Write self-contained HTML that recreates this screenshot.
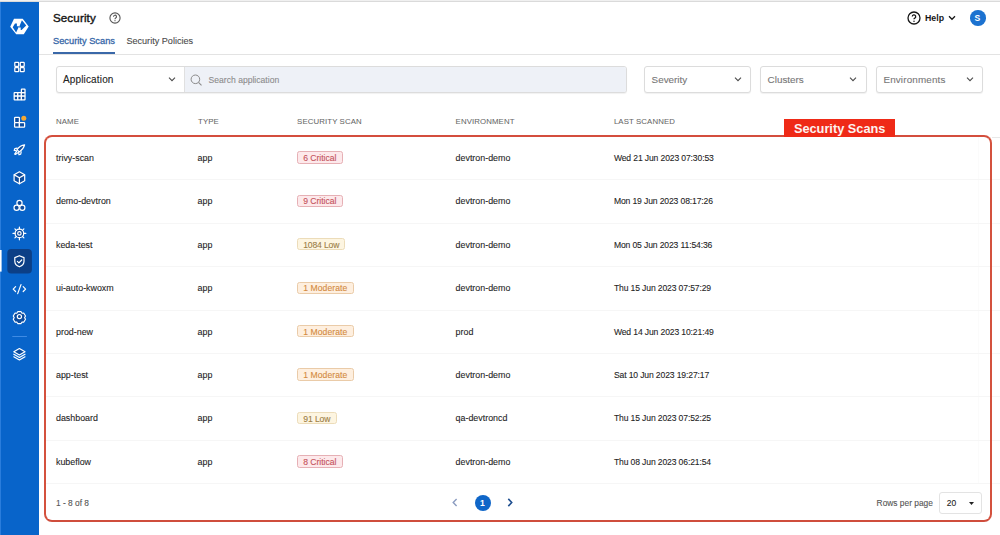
<!DOCTYPE html>
<html><head><meta charset="utf-8">
<style>
*{margin:0;padding:0;box-sizing:border-box}
html,body{width:1000px;height:535px;overflow:hidden;background:#fff;font-family:"Liberation Sans",sans-serif;color:#222}
.a{position:absolute;white-space:nowrap;line-height:1}
.r{position:absolute}
.box{position:absolute;top:66px;height:26.8px;border:1px solid #dcdcdc;border-radius:3px;background:#fff;box-shadow:0 1px 1px rgba(0,0,0,.06)}
.sep{position:absolute;left:46px;width:954px;height:1px;background:#f6f6f6}
.badge{position:absolute;left:296.5px;height:12.3px;border:1px solid;border-radius:2.5px}
.crit{background:#fde9eb;border-color:#e6b0b5}
.mod{background:#feefdf;border-color:#eacba8}
.low{background:#fdf5e1;border-color:#ecdcb9}
</style></head><body>
<div class="r" style="left:0;top:0;width:1000px;height:1px;background:#f0f0f0"></div>
<div class="r" style="left:0;top:1px;width:1000px;height:1px;background:#dadada"></div>
<div class="r" style="left:0;top:2px;width:39px;height:533px;background:#0864ca"></div>
<div class="r" style="left:0;top:2px;width:1px;height:533px;background:#2a7ddc"></div>
<svg style="position:absolute;left:0;top:0" width="39" height="535" viewBox="0 0 39 535">
<g fill="#fff">
<!-- logo -->
<path fill-rule="evenodd" d="M14.00 18.70 22.70 18.70 28.70 26.40 23.80 34.20 16.20 34.20 10.20 26.70Z M12.70 27.30 15.00 23.60 16.90 23.60 16.90 26.20 19.10 26.20 16.10 32.60Z M21.90 20.30 26.20 25.40 21.60 29.90 20.70 29.90 20.70 27.40 18.90 27.40Z"/>
</g>
<g fill="#0d4c9e" stroke="#fff" stroke-width="1.25">
<!-- grid 4 -->
<rect x="14.8" y="62.4" width="3.9" height="3.9" rx=".6"/><rect x="20.3" y="62.4" width="3.9" height="3.9" rx=".6"/>
<rect x="14.8" y="67.6" width="3.9" height="3.9" rx=".6"/><rect x="20.3" y="67.6" width="3.9" height="3.9" rx=".6"/>
<!-- stair grid -->
<rect x="14.2" y="92.6" width="3.6" height="3.6" rx=".4"/><rect x="17.8" y="92.6" width="3.6" height="3.6" rx=".4"/><rect x="21.4" y="92.6" width="3.6" height="3.6" rx=".4"/>
<rect x="14.2" y="96.2" width="3.6" height="3.6" rx=".4"/><rect x="17.8" y="96.2" width="3.6" height="3.6" rx=".4"/><rect x="21.4" y="96.2" width="3.6" height="3.6" rx=".4"/>
<rect x="21.4" y="89.0" width="3.6" height="3.6" rx=".4"/>
<!-- grid with dot -->
<rect x="14.6" y="117.3" width="4.8" height="5.2" rx=".8"/>
<rect x="14.6" y="122.5" width="4.8" height="4.6" rx=".6"/><rect x="19.4" y="122.5" width="5.2" height="4.6" rx=".6"/>
</g>
<circle cx="23.8" cy="118.2" r="2.5" fill="#f5a833"/>
<g fill="none" stroke="#fff" stroke-width="1.2" stroke-linejoin="round" stroke-linecap="round">
<!-- rocket -->
<path d="M24.6 144.9c-3.2.3-5.6 2-7.6 4.8l2.3 2.3c2.8-2 4.6-4.3 5.3-7.1z" fill="#0d4c9e"/>
<path d="M17.2 148.2l-2.4.5-.6 1.7 2.5.4M21.2 151.8l-.5 2.4-1.7.6-.4-2.5"/>
<path d="M16.6 151.4l-2 2.6M17.8 152.8l-2.4 1.6"/>
<!-- cube -->
<path d="M19.4 171.8l5.3 3v6l-5.3 3-5.3-3v-6z" fill="#0d4c9e"/>
<path d="M14.3 174.9l5.1 2.8 5.1-2.8M19.4 177.7v6"/>
<!-- three circles -->
<circle cx="19.5" cy="202.9" r="2.6" fill="#0d4c9e"/><circle cx="16.6" cy="207.8" r="2.6" fill="#0d4c9e"/><circle cx="22.3" cy="207.8" r="2.6" fill="#0d4c9e"/>
<!-- helm -->
<circle cx="19.4" cy="233.4" r="4.3" fill="#0d4c9e"/><circle cx="19.4" cy="233.4" r="1.7"/>
<path d="M19.4 227v2M19.4 237.8v2M13 233.4h2M23.8 233.4h2M14.9 228.9l1.4 1.4M22.5 236.5l1.4 1.4M23.9 228.9l-1.4 1.4M16.3 236.5l-1.4 1.4"/>
</g>
<rect x="7.3" y="249" width="24.6" height="24.4" rx="4" fill="#0c3f86"/>
<rect x="0" y="250" width="1.6" height="21.6" fill="#fff"/>
<g fill="none" stroke="#fff" stroke-width="1.2" stroke-linejoin="round" stroke-linecap="round">
<!-- shield -->
<path d="M19.4 255.7l4.6 1.9v3.6c0 2.7-2 4.6-4.6 5.6-2.6-1-4.6-2.9-4.6-5.6v-3.6z"/>
<path d="M17.4 261.3l1.5 1.5 2.8-2.8"/>
<!-- code -->
<path d="M15.6 286.7l-2.4 2.4 2.4 2.4M23.2 286.7l2.4 2.4-2.4 2.4M21 284.6l-3.3 9"/>
<!-- gear -->
<path d="M17.6 311.3h3.6l1 1.7 2-.1 1.8 3.1-1 1.7 1 1.7-1.8 3.1-2-.1-1 1.7h-3.6l-1-1.7-2 .1-1.8-3.1 1-1.7-1-1.7 1.8-3.1 2 .1z" transform="translate(19.4 316.6) scale(.93) translate(-19.4 -316.6)" fill="#0d4c9e"/>
<circle cx="19.4" cy="316.6" r="2.1"/>
<!-- layers -->
<path d="M19.4 348.5l5.6 3.2-5.6 3.2-5.6-3.2z" fill="#0d4c9e"/>
<path d="M13.8 354.2l5.6 3.2 5.6-3.2M13.8 356.8l5.6 3.2 5.6-3.2"/>
</g>
<rect x="12.3" y="336" width="14.6" height="1" fill="#3f8be4"/>
</svg>

<div class="a" style="left:52.90px;top:12px;font-size:11.60px;color:#161616;letter-spacing:0.142px;-webkit-text-stroke:0.4px #161616">Security</div>
<svg class="r" style="left:108.7px;top:11.55px" width="12" height="12" viewBox="0 0 12 12"><circle cx="6" cy="6" r="5.1" fill="none" stroke="#555" stroke-width="1.1"/><path d="M4.5 4.7a1.5 1.5 0 1 1 2.2 1.3c-.5.3-.7.5-.7 1.2" fill="none" stroke="#555" stroke-width="1.1"/><circle cx="6" cy="8.7" r=".6" fill="#555"/></svg>
<div class="a" style="left:53.00px;top:37px;font-size:9.30px;color:#3767a8;-webkit-text-stroke:0.3px #3767a8">Security Scans</div>
<div class="a" style="left:126.40px;top:37px;font-size:9.11px;color:#4a4a4a;-webkit-text-stroke:0.1px #4a4a4a">Security Policies</div>
<div class="r" style="left:53px;top:52.4px;width:62px;height:2px;background:#3a68a8"></div>
<div class="r" style="left:39px;top:54px;width:961px;height:1px;background:#e3e3e3"></div>
<svg class="r" style="left:906.5px;top:10.5px" width="14" height="14" viewBox="0 0 14 14"><circle cx="7" cy="7" r="6" fill="none" stroke="#161616" stroke-width="1.3"/><path d="M5.3 5.6a1.7 1.7 0 1 1 2.5 1.5c-.6.3-.8.6-.8 1.2" fill="none" stroke="#161616" stroke-width="1.3"/><circle cx="7" cy="10.2" r=".75" fill="#161616"/></svg>
<div class="a" style="left:925.00px;top:14px;font-size:8.77px;color:#161616;font-weight:bold">Help</div>
<svg class="r" style="left:948px;top:15px" width="8" height="6" viewBox="0 0 8 6"><path d="M1 1.3l3 3 3-3" fill="none" stroke="#161616" stroke-width="1.3"/></svg>
<div class="r" style="left:970px;top:10px;width:15.5px;height:15.5px;border-radius:50%;background:#1c72d0"></div>
<div class="a" style="left:974.60px;top:14px;font-size:8.60px;color:#fff;font-weight:bold">S</div>
<div class="box" style="left:55.5px;width:571.5px"></div>
<div class="r" style="left:184.5px;top:67px;width:441.5px;height:24.8px;background:#eef1f7;border-radius:0 2px 2px 0"></div>
<div class="r" style="left:184px;top:67px;width:1px;height:24.8px;background:#e0e0e0"></div>
<div class="a" style="left:63.00px;top:75px;font-size:10.00px;color:#222;-webkit-text-stroke:0.1px #222;letter-spacing:0.148px">Application</div>
<svg class="r" style="left:166.6px;top:76px" width="10" height="7" viewBox="0 0 10 7"><path d="M2 1.7l3 3 3-3" fill="none" stroke="#4a4a4a" stroke-width="1.05"/></svg>
<svg class="r" style="left:190px;top:74px" width="13" height="12" viewBox="0 0 13 12"><circle cx="5.4" cy="5.3" r="4.3" fill="none" stroke="#8a8a8a" stroke-width="1"/><path d="M8.5 8.4l3 3" stroke="#8a8a8a" stroke-width="1.1"/></svg>
<div class="a" style="left:208.60px;top:76px;font-size:8.59px;color:#8c8c8c;-webkit-text-stroke:0.1px #8c8c8c">Search application</div>
<div class="box" style="left:644px;width:107.3px"></div>
<div class="a" style="left:651.60px;top:75px;font-size:9.90px;color:#767676;-webkit-text-stroke:0.1px #767676;letter-spacing:-0.023px">Severity</div>
<svg class="r" style="left:733.0999999999999px;top:76px" width="10" height="7" viewBox="0 0 10 7"><path d="M2 1.7l3 3 3-3" fill="none" stroke="#4a4a4a" stroke-width="1.05"/></svg>
<div class="box" style="left:760px;width:106.6px"></div>
<div class="a" style="left:767.60px;top:75px;font-size:9.90px;color:#767676;-webkit-text-stroke:0.1px #767676">Clusters</div>
<svg class="r" style="left:848.4px;top:76px" width="10" height="7" viewBox="0 0 10 7"><path d="M2 1.7l3 3 3-3" fill="none" stroke="#4a4a4a" stroke-width="1.05"/></svg>
<div class="box" style="left:875.8px;width:107.3px"></div>
<div class="a" style="left:883.40px;top:75px;font-size:9.90px;color:#767676;-webkit-text-stroke:0.1px #767676;letter-spacing:0.152px">Environments</div>
<svg class="r" style="left:964.8999999999999px;top:76px" width="10" height="7" viewBox="0 0 10 7"><path d="M2 1.7l3 3 3-3" fill="none" stroke="#4a4a4a" stroke-width="1.05"/></svg>
<div class="a" style="left:56.00px;top:118px;font-size:7.80px;color:#666;letter-spacing:0.120px;-webkit-text-stroke:0.05px #666">NAME</div>
<div class="a" style="left:198.10px;top:118px;font-size:7.80px;color:#666;letter-spacing:0.120px;-webkit-text-stroke:0.05px #666">TYPE</div>
<div class="a" style="left:297.10px;top:118px;font-size:7.80px;color:#666;letter-spacing:0.120px;-webkit-text-stroke:0.05px #666">SECURITY SCAN</div>
<div class="a" style="left:455.60px;top:118px;font-size:7.80px;color:#666;letter-spacing:0.120px;-webkit-text-stroke:0.05px #666">ENVIRONMENT</div>
<div class="a" style="left:613.90px;top:118px;font-size:7.80px;color:#666;letter-spacing:0.120px;-webkit-text-stroke:0.05px #666">LAST SCANNED</div>
<div class="r" style="left:992px;top:136.5px;width:8px;height:1px;background:#e8e8e8"></div>
<div class="r" style="left:978px;top:137px;width:1px;height:346px;background:#fbfbfb"></div>
<div class="a" style="left:56.00px;top:154px;font-size:8.90px;color:#1f1f1f;-webkit-text-stroke:0.1px #1f1f1f">trivy-scan</div>
<div class="a" style="left:197.60px;top:154px;font-size:8.90px;color:#1f1f1f;-webkit-text-stroke:0.1px #1f1f1f">app</div>
<div class="badge crit" style="top:151.30px;width:46px"></div>
<div class="a" style="left:303.20px;top:154px;font-size:8.60px;color:#c4525a;-webkit-text-stroke:0.1px #c4525a;letter-spacing:-0.017px">6 Critical</div>
<div class="a" style="left:455.60px;top:154px;font-size:8.90px;color:#1f1f1f;-webkit-text-stroke:0.1px #1f1f1f">devtron-demo</div>
<div class="a" style="left:613.90px;top:154px;font-size:8.60px;color:#1f1f1f;-webkit-text-stroke:0.1px #1f1f1f;letter-spacing:-0.136px">Wed 21 Jun 2023 07:30:53</div>
<div class="sep" style="top:179.30px"></div>
<div class="a" style="left:56.00px;top:197px;font-size:8.90px;color:#1f1f1f;-webkit-text-stroke:0.1px #1f1f1f">demo-devtron</div>
<div class="a" style="left:197.60px;top:197px;font-size:8.90px;color:#1f1f1f;-webkit-text-stroke:0.1px #1f1f1f">app</div>
<div class="badge crit" style="top:194.73px;width:46px"></div>
<div class="a" style="left:303.20px;top:197px;font-size:8.60px;color:#c4525a;-webkit-text-stroke:0.1px #c4525a;letter-spacing:-0.017px">9 Critical</div>
<div class="a" style="left:455.60px;top:197px;font-size:8.90px;color:#1f1f1f;-webkit-text-stroke:0.1px #1f1f1f">devtron-demo</div>
<div class="a" style="left:613.90px;top:197px;font-size:8.60px;color:#1f1f1f;-webkit-text-stroke:0.1px #1f1f1f;letter-spacing:-0.136px">Mon 19 Jun 2023 08:17:26</div>
<div class="sep" style="top:222.73px"></div>
<div class="a" style="left:56.00px;top:241px;font-size:8.90px;color:#1f1f1f;-webkit-text-stroke:0.1px #1f1f1f">keda-test</div>
<div class="a" style="left:197.60px;top:241px;font-size:8.90px;color:#1f1f1f;-webkit-text-stroke:0.1px #1f1f1f">app</div>
<div class="badge low" style="top:238.16px;width:48.6px"></div>
<div class="a" style="left:303.20px;top:241px;font-size:8.60px;color:#9c7d45;-webkit-text-stroke:0.1px #9c7d45;letter-spacing:-0.143px">1084 Low</div>
<div class="a" style="left:455.60px;top:241px;font-size:8.90px;color:#1f1f1f;-webkit-text-stroke:0.1px #1f1f1f">devtron-demo</div>
<div class="a" style="left:613.90px;top:241px;font-size:8.60px;color:#1f1f1f;-webkit-text-stroke:0.1px #1f1f1f;letter-spacing:-0.136px">Mon 05 Jun 2023 11:54:36</div>
<div class="sep" style="top:266.16px"></div>
<div class="a" style="left:56.00px;top:284px;font-size:8.90px;color:#1f1f1f;-webkit-text-stroke:0.1px #1f1f1f">ui-auto-kwoxm</div>
<div class="a" style="left:197.60px;top:284px;font-size:8.90px;color:#1f1f1f;-webkit-text-stroke:0.1px #1f1f1f">app</div>
<div class="badge mod" style="top:281.59px;width:57.3px"></div>
<div class="a" style="left:303.20px;top:284px;font-size:8.60px;color:#d38a3e;-webkit-text-stroke:0.1px #d38a3e;letter-spacing:0.066px">1 Moderate</div>
<div class="a" style="left:455.60px;top:284px;font-size:8.90px;color:#1f1f1f;-webkit-text-stroke:0.1px #1f1f1f">devtron-demo</div>
<div class="a" style="left:613.90px;top:284px;font-size:8.60px;color:#1f1f1f;-webkit-text-stroke:0.1px #1f1f1f;letter-spacing:-0.136px">Thu 15 Jun 2023 07:57:29</div>
<div class="sep" style="top:309.59px"></div>
<div class="a" style="left:56.00px;top:328px;font-size:8.90px;color:#1f1f1f;-webkit-text-stroke:0.1px #1f1f1f">prod-new</div>
<div class="a" style="left:197.60px;top:328px;font-size:8.90px;color:#1f1f1f;-webkit-text-stroke:0.1px #1f1f1f">app</div>
<div class="badge mod" style="top:325.02px;width:57.3px"></div>
<div class="a" style="left:303.20px;top:328px;font-size:8.60px;color:#d38a3e;-webkit-text-stroke:0.1px #d38a3e;letter-spacing:0.066px">1 Moderate</div>
<div class="a" style="left:455.60px;top:328px;font-size:8.90px;color:#1f1f1f;-webkit-text-stroke:0.1px #1f1f1f">prod</div>
<div class="a" style="left:613.90px;top:328px;font-size:8.60px;color:#1f1f1f;-webkit-text-stroke:0.1px #1f1f1f;letter-spacing:-0.136px">Wed 14 Jun 2023 10:21:49</div>
<div class="sep" style="top:353.02px"></div>
<div class="a" style="left:56.00px;top:371px;font-size:8.90px;color:#1f1f1f;-webkit-text-stroke:0.1px #1f1f1f">app-test</div>
<div class="a" style="left:197.60px;top:371px;font-size:8.90px;color:#1f1f1f;-webkit-text-stroke:0.1px #1f1f1f">app</div>
<div class="badge mod" style="top:368.45px;width:57.3px"></div>
<div class="a" style="left:303.20px;top:371px;font-size:8.60px;color:#d38a3e;-webkit-text-stroke:0.1px #d38a3e;letter-spacing:0.066px">1 Moderate</div>
<div class="a" style="left:455.60px;top:371px;font-size:8.90px;color:#1f1f1f;-webkit-text-stroke:0.1px #1f1f1f">devtron-demo</div>
<div class="a" style="left:613.90px;top:371px;font-size:8.60px;color:#1f1f1f;-webkit-text-stroke:0.1px #1f1f1f;letter-spacing:-0.136px">Sat 10 Jun 2023 19:27:17</div>
<div class="sep" style="top:396.45px"></div>
<div class="a" style="left:56.00px;top:414px;font-size:8.90px;color:#1f1f1f;-webkit-text-stroke:0.1px #1f1f1f">dashboard</div>
<div class="a" style="left:197.60px;top:414px;font-size:8.90px;color:#1f1f1f;-webkit-text-stroke:0.1px #1f1f1f">app</div>
<div class="badge low" style="top:411.88px;width:40px"></div>
<div class="a" style="left:303.20px;top:415px;font-size:8.60px;color:#9c7d45;-webkit-text-stroke:0.1px #9c7d45;letter-spacing:-0.086px">91 Low</div>
<div class="a" style="left:455.60px;top:414px;font-size:8.90px;color:#1f1f1f;-webkit-text-stroke:0.1px #1f1f1f">qa-devtroncd</div>
<div class="a" style="left:613.90px;top:414px;font-size:8.60px;color:#1f1f1f;-webkit-text-stroke:0.1px #1f1f1f;letter-spacing:-0.136px">Thu 15 Jun 2023 07:52:25</div>
<div class="sep" style="top:439.88px"></div>
<div class="a" style="left:56.00px;top:458px;font-size:8.90px;color:#1f1f1f;-webkit-text-stroke:0.1px #1f1f1f">kubeflow</div>
<div class="a" style="left:197.60px;top:458px;font-size:8.90px;color:#1f1f1f;-webkit-text-stroke:0.1px #1f1f1f">app</div>
<div class="badge crit" style="top:455.31px;width:46px"></div>
<div class="a" style="left:303.20px;top:458px;font-size:8.60px;color:#c4525a;-webkit-text-stroke:0.1px #c4525a;letter-spacing:-0.017px">8 Critical</div>
<div class="a" style="left:455.60px;top:458px;font-size:8.90px;color:#1f1f1f;-webkit-text-stroke:0.1px #1f1f1f">devtron-demo</div>
<div class="a" style="left:613.90px;top:458px;font-size:8.60px;color:#1f1f1f;-webkit-text-stroke:0.1px #1f1f1f;letter-spacing:-0.136px">Thu 08 Jun 2023 06:21:54</div>
<div class="sep" style="top:483.31px"></div>
<div class="a" style="left:56.00px;top:499px;font-size:8.36px;color:#555;-webkit-text-stroke:0.1px #555">1 - 8 of 8</div>
<svg class="r" style="left:451px;top:497px" width="8" height="11" viewBox="0 0 8 11"><path d="M5.6 1.9l-3.4 3.6 3.4 3.6" fill="none" stroke="#8b9cc0" stroke-width="1.4"/></svg>
<div class="r" style="left:474.5px;top:494.8px;width:16.2px;height:16.2px;border-radius:50%;background:#0f66c8"></div>
<div class="a" style="left:480.10px;top:499px;font-size:8.60px;color:#fff;font-weight:bold">1</div>
<svg class="r" style="left:506px;top:497px" width="8" height="11" viewBox="0 0 8 11"><path d="M2.3 1.9l3.4 3.6-3.4 3.6" fill="none" stroke="#1f4f90" stroke-width="1.6"/></svg>
<div class="a" style="left:876.60px;top:499px;font-size:8.39px;color:#555;-webkit-text-stroke:0.1px #555">Rows per page</div>
<div class="r" style="left:939px;top:491.6px;width:43.3px;height:22px;border:1px solid #e3e3e3;border-radius:3px"></div>
<div class="a" style="left:946.80px;top:499px;font-size:8.45px;color:#222;-webkit-text-stroke:0.1px #222">20</div>
<svg class="r" style="left:968.5px;top:501.5px" width="5" height="3" viewBox="0 0 5 3"><path d="M0 0h5l-2.5 3z" fill="#222"/></svg>
<div class="r" style="left:44px;top:135px;width:948px;height:387px;border:2px solid #d4513d;border-top-color:#d44e3d;border-bottom-color:#cf4d3c;border-radius:8px"></div>
<div class="r" style="left:784.1px;top:119.4px;width:110.8px;height:17.6px;background:#ef2a17"></div>
<div class="a" style="left:793.90px;top:123px;font-size:12.77px;color:#fdf2f0;font-weight:bold">Security Scans</div>
</body></html>
